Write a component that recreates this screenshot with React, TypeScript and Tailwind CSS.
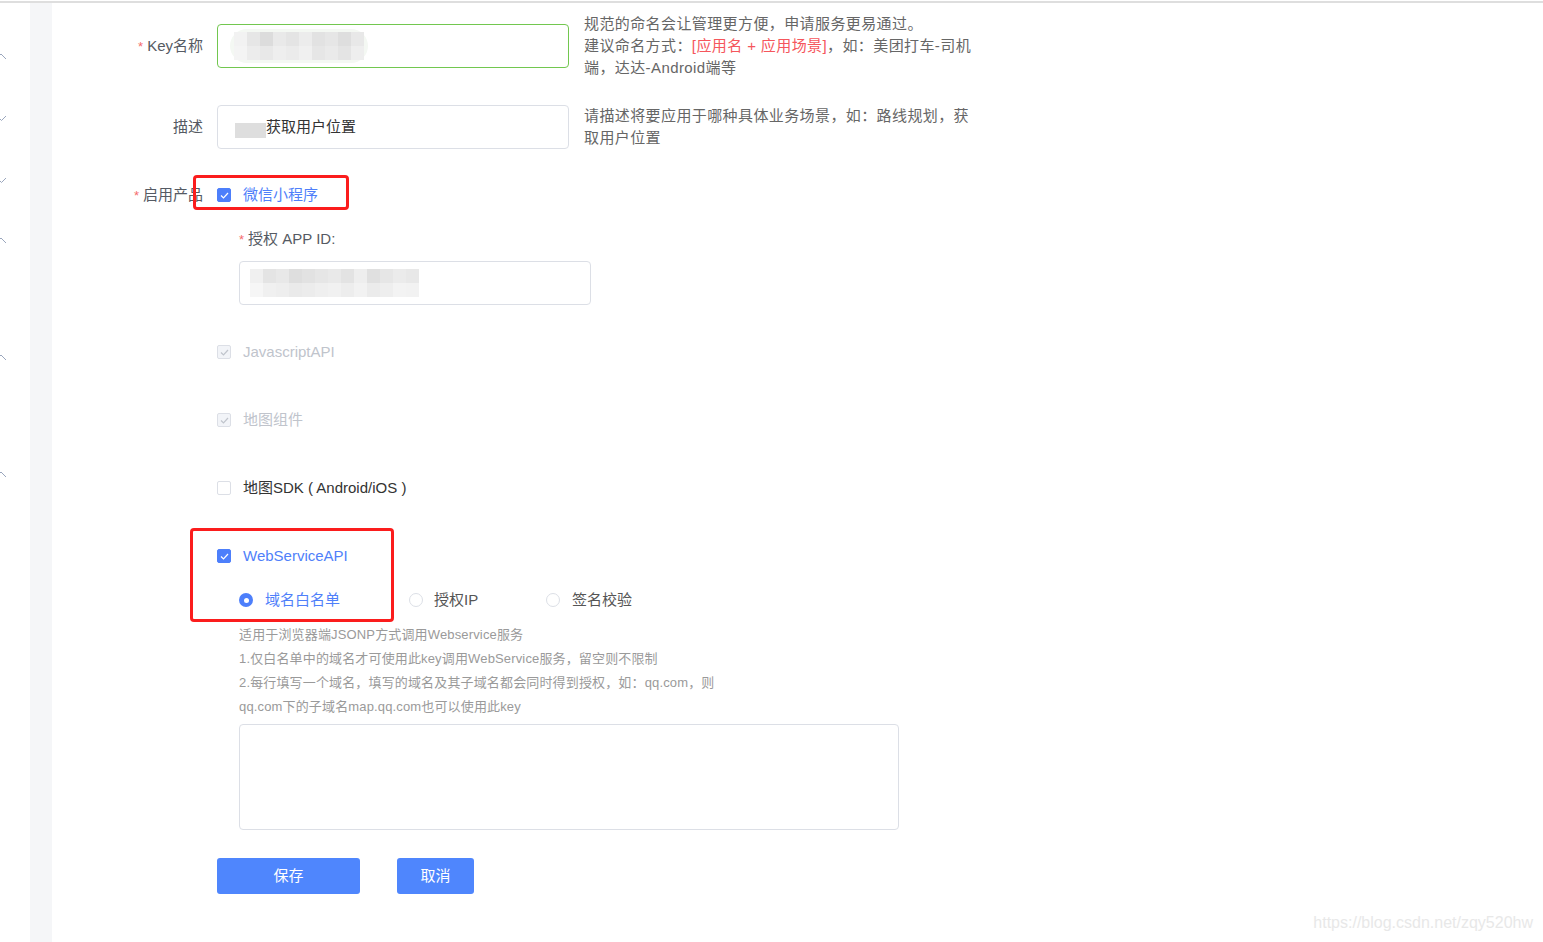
import React from "react";

const FONT = { fontFamily: '"Liberation Sans", "Noto Sans CJK SC", sans-serif' };

const Star = () => <span className="text-[#f56c6c] mr-[4px] text-[13px]">*</span>;

type BoxState = "checked" | "disabled" | "empty";

const CheckBox = ({ state }: { state: BoxState }) => {
  const cls =
    state === "checked"
      ? "bg-[#4d7ffb] border-[#4d7ffb]"
      : state === "disabled"
      ? "bg-[#f2f4f8] border-[#dcdfe6]"
      : "bg-white border-[#dcdfe6]";
  return (
    <span className={`w-[14px] h-[14px] rounded-[2px] border flex items-center justify-center shrink-0 ${cls}`}>
      {state !== "empty" && (
        <svg width="9" height="7" viewBox="0 0 9 7" fill="none">
          <path
            d="M1 3.5 L3.5 6 L8 1"
            stroke={state === "checked" ? "#ffffff" : "#c0c4cc"}
            strokeWidth="1.2"
          />
        </svg>
      )}
    </span>
  );
};

const Radio = ({ checked }: { checked?: boolean }) =>
  checked ? (
    <span className="w-[14px] h-[14px] rounded-full bg-[#4d7ffb] flex items-center justify-center shrink-0">
      <span className="w-[5px] h-[5px] rounded-full bg-white" />
    </span>
  ) : (
    <span className="w-[14px] h-[14px] rounded-full border border-[#dcdfe6] bg-white shrink-0" />
  );

// blurred mosaic used for masked values
const Mosaic = ({ shades }: { shades: string[][] }) => (
  <div className="flex flex-col blur-[0.6px]">
    {shades.map((row, i) => (
      <div key={i} className="flex">
        {row.map((c, j) => (
          <span key={j} className="w-[13px] h-[14px]" style={{ background: c }} />
        ))}
      </div>
    ))}
  </div>
);

const keyMosaic = [
  ["#f2f2f2", "#e6e6e6", "#dcdcdc", "#e9e9e9", "#e4e4e4", "#ececec", "#e2e2e2", "#e6e6e6", "#dedede", "#e8e8e8"],
  ["#f4f4f4", "#ececec", "#e8e8e8", "#eeeeee", "#ebebeb", "#f0f0f0", "#e6e6e6", "#eaeaea", "#e4e4e4", "#eeeeee"],
];

const appMosaic = [
  ["#f0f0f0", "#e4e4e4", "#e8e8e8", "#dedede", "#e2e2e2", "#e6e6e6", "#e9e9e9", "#e3e3e3", "#eeeeee", "#e0e0e0", "#e6e6e6", "#ebebeb", "#e8e8e8"],
  ["#f6f6f6", "#f0f0f0", "#eeeeee", "#eaeaea", "#ececec", "#efefef", "#f1f1f1", "#ededed", "#f2f2f2", "#ebebeb", "#eeeeee", "#f3f3f3", "#f2f2f2"],
];

const Chevron = ({ up }: { up?: boolean }) => (
  <svg width="8" height="6" viewBox="0 0 8 6" fill="none" className="block">
    <path d={up ? "M0 1 L1 0 L6 5" : "M0 3 L1.5 4.5 L6 0"} stroke="#9aa6bd" strokeWidth="1" />
  </svg>
);

export default function App() {
  return (
    <div className="relative w-full min-h-[942px] bg-white overflow-hidden" style={FONT}>
      <div className="h-[1px] bg-white" />
      <div className="h-[2px] bg-[#dedede]" />

      <div className="flex">
        {/* sidebar edge */}
        <div className="w-[30px] shrink-0 flex flex-col">
          <div className="mt-[51px]"><Chevron up /></div>
          <div className="mt-[56px]"><Chevron /></div>
          <div className="mt-[56px]"><Chevron /></div>
          <div className="mt-[54px]"><Chevron up /></div>
          <div className="mt-[111px]"><Chevron up /></div>
          <div className="mt-[111px]"><Chevron up /></div>
        </div>
        <div className="w-[22px] shrink-0 bg-[#f5f6f8] min-h-[939px]" />

        {/* form */}
        <main className="flex-1 text-[15px]">
          {/* Key name */}
          <div className="flex items-center mt-[10px]">
            <label className="w-[151px] text-right text-[#555a63] leading-[22px]">
              <Star />Key名称
            </label>
            <div className="ml-[14px] w-[352px] h-[44px] rounded-[4px] border border-[#72c74f] flex items-center pl-[12px]">
              <div className="rounded-full bg-[#f4f8f3] px-[4px] py-[3px]">
                <Mosaic shades={keyMosaic} />
              </div>
            </div>
            <div className="ml-[15px] text-[#666] leading-[22px] tracking-[0.4px]">
              <div>规范的命名会让管理更方便，申请服务更易通过。</div>
              <div>
                建议命名方式：<span className="text-[#f5565c]">[应用名 + 应用场景]</span>，如：美团打车-司机
              </div>
              <div>端，达达-Android端等</div>
            </div>
          </div>

          {/* Description */}
          <div className="flex items-center mt-[26px]">
            <label className="w-[151px] text-right text-[#555a63] leading-[22px]">描述</label>
            <div className="ml-[14px] w-[352px] h-[44px] rounded-[4px] border border-[#dcdfe6] flex items-center pl-[17px] text-[#333]">
              <span className="w-[31px] h-[15px] bg-[#dedede] blur-[0.4px] mt-[6px]" />
              <span className="leading-[22px]">获取用户位置</span>
            </div>
            <div className="ml-[15px] text-[#666] leading-[22px] tracking-[0.4px]">
              <div>请描述将要应用于哪种具体业务场景，如：路线规划，获</div>
              <div>取用户位置</div>
            </div>
          </div>

          {/* Products */}
          <div className="flex items-start mt-[35px]">
            <label className="w-[151px] text-right text-[#555a63] leading-[22px]">
              <Star />启用产品
            </label>
            <div className="ml-[14px] flex flex-col">
              <div className="relative flex items-center gap-[12px] leading-[22px]">
                <CheckBox state="checked" />
                <span className="text-[#4f7ffa]">微信小程序</span>
                <div className="absolute left-[-24px] top-[-9px] w-[156px] h-[35px] border-[3px] border-[#fb1d1d] rounded-[4px]" />
              </div>

              <div className="ml-[22px] mt-[22px] leading-[22px] text-[#555a63]">
                <Star />授权 APP ID:
              </div>
              <div className="ml-[22px] mt-[10px] w-[352px] h-[44px] rounded-[4px] border border-[#dcdfe6] flex items-center pl-[10px]">
                <Mosaic shades={appMosaic} />
              </div>

              <div className="mt-[36px] flex items-center gap-[12px] leading-[22px]">
                <CheckBox state="disabled" />
                <span className="text-[#c0c4cc]">JavascriptAPI</span>
              </div>
              <div className="mt-[46px] flex items-center gap-[12px] leading-[22px]">
                <CheckBox state="disabled" />
                <span className="text-[#c0c4cc]">地图组件</span>
              </div>
              <div className="mt-[46px] flex items-center gap-[12px] leading-[22px]">
                <CheckBox state="empty" />
                <span className="text-[#333]">地图SDK ( Android/iOS )</span>
              </div>

              <div className="relative mt-[46px]">
                <div className="absolute left-[-27px] top-[-17px] w-[204px] h-[94px] border-[3px] border-[#fb1d1d] rounded-[4px]" />
                <div className="flex items-center gap-[12px] leading-[22px]">
                  <CheckBox state="checked" />
                  <span className="text-[#4f7ffa]">WebServiceAPI</span>
                </div>
                <div className="ml-[22px] mt-[22px] flex items-center leading-[22px]">
                  <div className="w-[170px] flex items-center gap-[12px]">
                    <Radio checked />
                    <span className="text-[#4f7ffa]">域名白名单</span>
                  </div>
                  <div className="w-[137px] flex items-center gap-[11px]">
                    <Radio />
                    <span className="text-[#555]">授权IP</span>
                  </div>
                  <div className="flex items-center gap-[12px]">
                    <Radio />
                    <span className="text-[#555]">签名校验</span>
                  </div>
                </div>
              </div>

              <div className="ml-[22px] mt-[12px] text-[13px] leading-[24px] text-[#9a9a9a] tracking-[0.15px]">
                <div>适用于浏览器端JSONP方式调用Webservice服务</div>
                <div>1.仅白名单中的域名才可使用此key调用WebService服务，留空则不限制</div>
                <div>2.每行填写一个域名，填写的域名及其子域名都会同时得到授权，如：qq.com，则</div>
                <div>qq.com下的子域名map.qq.com也可以使用此key</div>
              </div>
              <textarea
                className="ml-[22px] mt-[5px] w-[660px] h-[106px] rounded-[4px] border border-[#dcdfe6] resize-none outline-none"
                readOnly
              />

              <div className="mt-[28px] flex gap-[37px]">
                <button className="w-[143px] h-[36px] rounded-[3px] bg-[#4f86fd] text-white text-[15px]">保存</button>
                <button className="w-[77px] h-[36px] rounded-[3px] bg-[#4f86fd] text-white text-[15px]">取消</button>
              </div>
            </div>
          </div>
        </main>
      </div>

      <div className="absolute right-[10px] top-[912px] text-[16px] text-[#e8e8e8] leading-[22px]">
        https://blog.csdn.net/zqy520hw
      </div>
    </div>
  );
}
